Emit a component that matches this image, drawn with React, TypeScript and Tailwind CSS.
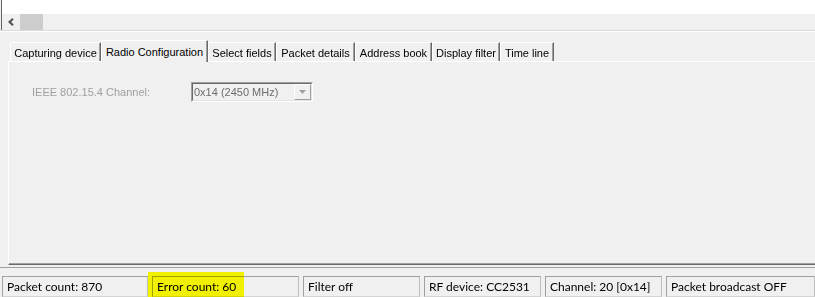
import React from 'react';

const tabs = [
  { label: 'Capturing device', w: 'w-[91px]' },
  { label: 'Radio Configuration', w: 'w-[107px]', active: true },
  { label: 'Select fields', w: 'w-[68px]' },
  { label: 'Packet details', w: 'w-[79px]' },
  { label: 'Address book', w: 'w-[77px]' },
  { label: 'Display filter', w: 'w-[68px]' },
  { label: 'Time line', w: 'w-[54px]' },
];

const panes = [
  { text: 'Packet count: 870', cls: 'ml-[2px] w-[146px]' },
  { text: 'Error count: 60', cls: 'ml-[4px] w-[147px]', mark: true },
  { text: 'Filter off', cls: 'ml-[4px] w-[117px]' },
  { text: 'RF device: CC2531', cls: 'ml-[4px] w-[117px]' },
  { text: 'Channel: 20 [0x14]', cls: 'ml-[4px] w-[117px]' },
  { text: 'Packet broadcast OFF', cls: 'ml-[4px] flex-1' },
];

export default function App() {
  return (
    <div className="w-[815px] h-[297px] bg-[#f0f0f0] flex flex-col overflow-hidden font-['Liberation_Sans',Arial,sans-serif]">
      {/* list view remains + horizontal scrollbar */}
      <div className="ml-px border-l border-[#646464]">
        <div className="h-[14px] bg-white" />
        <div className="h-[16px] bg-[#f0f0f0] flex items-center">
          <div className="w-[17px] h-[16px] flex items-center justify-center">
            <svg width="8" height="8" viewBox="0 0 8 8">
              <path d="M6 0.8 L2.6 4 L6 7.2" fill="none" stroke="#555" strokeWidth="2.2" />
            </svg>
          </div>
          <div className="ml-[1px] w-[23px] h-[16px] bg-[#cdcdcd]" />
        </div>
      </div>
      <div className="h-px bg-[#dadada]" />
      <div className="h-px bg-white" />
      <div className="h-[8px]" />

      {/* tabs */}
      <div className="h-[21px] flex items-end pl-[10px] text-[11px] text-black">
        {tabs.map((t) =>
          t.active ? (
            <div
              key={t.label}
              className={`${t.w} h-[22px] -mb-px relative z-10 bg-[#f0f0f0] border-l border-t border-white border-r border-r-[#696969] shadow-[inset_-1px_0_0_#a0a0a0] rounded-tl-[2px] flex items-start pt-[3px] justify-center`}
            >
              {t.label}
            </div>
          ) : (
            <div
              key={t.label}
              className={`${t.w} h-[19px] bg-[#f0f0f0] border-l border-t border-white border-r border-r-[#696969] shadow-[inset_-1px_0_0_#a0a0a0] rounded-tl-[2px] flex items-start pt-[2px] justify-center`}
            >
              {t.label}
            </div>
          )
        )}
      </div>

      {/* tab page */}
      <div className="h-[204px] ml-[8px] border-l border-t border-white border-b border-b-[#696969] shadow-[inset_0_-1px_0_#a0a0a0]">
        <div className="flex items-center pt-[20px] pl-[23px] text-[11px]">
          <div className="w-[159px] text-[#a0a0a0]">IEEE 802.15.4 Channel:</div>
          <div className="w-[122px] h-[20px] border-t border-l border-[#a0a0a0] border-b border-r border-b-white border-r-white">
            <div className="h-full border-t border-l border-[#696969] border-b border-r border-b-[#e3e3e3] border-r-[#e3e3e3] flex items-center">
              <span className="flex-1 pl-[1px] text-[#6d6d6d]">0x14 (2450 MHz)</span>
              <div className="w-[17px] h-[16px] border-t border-l border-white border-b border-r border-b-[#a0a0a0] border-r-[#a0a0a0] flex items-center justify-center">
                <svg width="7" height="4" viewBox="0 0 7 4">
                  <path d="M0 0 H7 L3.5 4 Z" fill="#a0a0a0" />
                </svg>
              </div>
            </div>
          </div>
        </div>
      </div>

      <div className="h-[2px]" />
      <div className="h-px bg-[#a0a0a0]" />
      <div className="h-[8px]" />

      {/* status bar */}
      <div className="h-[21px] flex relative font-['Lato','Noto_Sans',sans-serif] text-[12px] text-black">
        {panes.map((p) => (
          <div
            key={p.text}
            className={`${p.cls} h-[21px] border-t border-l border-[#a0a0a0] border-b border-r border-b-[#d4d4d4] border-r-[#bdbdbd] flex items-center pl-[4px] leading-none`}
          >
            {p.text}
          </div>
        ))}
        {/* highlighter mark */}
        <div className="absolute left-[148px] top-[-4px] w-[96px] h-[26px] bg-[#ffff00] mix-blend-multiply" />
      </div>
    </div>
  );
}
